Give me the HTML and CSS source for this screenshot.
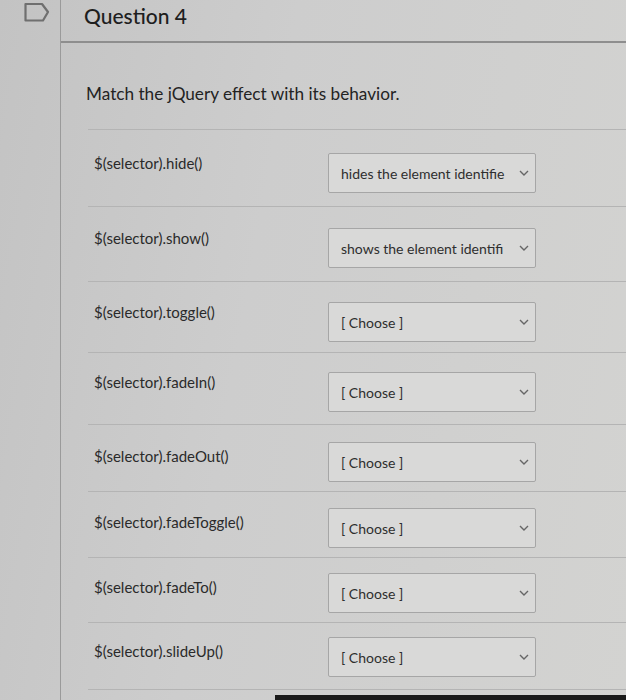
FILE: index.html
```
<!DOCTYPE html>
<html>
<head>
<meta charset="utf-8">
<link rel="stylesheet" href="styles.css">
</head>
<body>
<div class="page">
  <div class="gutter">
    <svg class="flag" width="30" height="24" viewBox="0 0 30 24"><path d="M3.5 4 L20 4 L26 12 L21 20.5 L3.5 20.5 Z" fill="none" stroke="#6f6f6f" stroke-width="2.2" stroke-linejoin="round"/></svg>
  </div>
  <div class="main">
    <div class="header"><h1 class="title">Question 4</h1></div>
    <p class="prompt">Match the jQuery effect with its behavior.</p>
    <div class="rows">
      <div class="row"><div class="label">$(selector).hide()</div><div class="select"><span class="value">hides the element identifie</span><svg class="chev" width="10" height="6" viewBox="0 0 10 6"><path d="M1 1 L5 5 L9 1" fill="none" stroke="#666" stroke-width="1.4"/></svg></div></div>
      <div class="row"><div class="label">$(selector).show()</div><div class="select"><span class="value">shows the element identifi</span><svg class="chev" width="10" height="6" viewBox="0 0 10 6"><path d="M1 1 L5 5 L9 1" fill="none" stroke="#666" stroke-width="1.4"/></svg></div></div>
      <div class="row"><div class="label">$(selector).toggle()</div><div class="select"><span class="value">[ Choose ]</span><svg class="chev" width="10" height="6" viewBox="0 0 10 6"><path d="M1 1 L5 5 L9 1" fill="none" stroke="#666" stroke-width="1.4"/></svg></div></div>
      <div class="row"><div class="label">$(selector).fadeIn()</div><div class="select"><span class="value">[ Choose ]</span><svg class="chev" width="10" height="6" viewBox="0 0 10 6"><path d="M1 1 L5 5 L9 1" fill="none" stroke="#666" stroke-width="1.4"/></svg></div></div>
      <div class="row"><div class="label">$(selector).fadeOut()</div><div class="select"><span class="value">[ Choose ]</span><svg class="chev" width="10" height="6" viewBox="0 0 10 6"><path d="M1 1 L5 5 L9 1" fill="none" stroke="#666" stroke-width="1.4"/></svg></div></div>
      <div class="row"><div class="label">$(selector).fadeToggle()</div><div class="select"><span class="value">[ Choose ]</span><svg class="chev" width="10" height="6" viewBox="0 0 10 6"><path d="M1 1 L5 5 L9 1" fill="none" stroke="#666" stroke-width="1.4"/></svg></div></div>
      <div class="row"><div class="label">$(selector).fadeTo()</div><div class="select"><span class="value">[ Choose ]</span><svg class="chev" width="10" height="6" viewBox="0 0 10 6"><path d="M1 1 L5 5 L9 1" fill="none" stroke="#666" stroke-width="1.4"/></svg></div></div>
      <div class="row"><div class="label">$(selector).slideUp()</div><div class="select"><span class="value">[ Choose ]</span><svg class="chev" width="10" height="6" viewBox="0 0 10 6"><path d="M1 1 L5 5 L9 1" fill="none" stroke="#666" stroke-width="1.4"/></svg></div></div>
    </div>
  </div>
</div>
<div class="bezel"></div>
</body>
</html>
```
FILE: styles.css
```
html, body {
  margin: 0;
  padding: 0;
}
body {
  position: relative;
  width: 626px;
  height: 700px;
  overflow: hidden;
  background: linear-gradient(100deg, #c3c3c3 0%, #cdcdcd 40%, #d3d3d1 100%);
  font-family: Lato, "Open Sans", "Liberation Sans", sans-serif;
  color: #2a2a2a;
}
.page {
  display: flex;
  height: 700px;
}
.gutter {
  width: 60px;
  flex: none;
}
.flag {
  display: block;
  margin-left: 22px;
  margin-top: 0;
}
.main {
  flex: 1;
  border-left: 1px solid #9a9a9a;
  display: flex;
  flex-direction: column;
}
.header {
  height: 43px;
  border-bottom: 2px solid #8e8e8e;
  padding-left: 23px;
  box-sizing: border-box;
}
.title {
  margin: 0;
  padding-top: 3px;
  font-size: 21px;
  font-weight: 500;
  line-height: 26px;
  color: #1e1e1e;
}
.prompt {
  margin: 40px 0 0 25px;
  font-size: 17.2px;
  line-height: 22px;
  color: #232323;
}
.rows {
  margin-top: 24px;
  margin-left: 27px;
  border-top: 1px solid #b4b4b4;
}
.row {
  height: 70px;
  box-sizing: border-box;
  border-bottom: 1px solid #b4b4b4;
  display: flex;
  align-items: flex-start;
  padding-top: 21px;
  padding-left: 6px;
}
.row:nth-child(1) { height: 77px; padding-top: 23px; }
.row:nth-child(2) { height: 75px; }
.row:nth-child(3) { height: 71px; padding-top: 20px; }
.row:nth-child(4) { height: 72px; padding-top: 19px; }
.row:nth-child(5) { height: 67px; padding-top: 17px; }
.row:nth-child(6) { height: 66px; padding-top: 16px; }
.row:nth-child(7) { height: 65px; padding-top: 15px; }
.row:nth-child(8) { height: 67px; padding-top: 14px; }
.label {
  width: 234px;
  flex: none;
  padding-top: 0;
  font-size: 15px;
  line-height: 20px;
  color: #2a2a2a;
}
.row:nth-child(n+5) .label { padding-top: 4px; }
.select {
  width: 208px;
  height: 40px;
  box-sizing: border-box;
  border: 1px solid #a6a6a6;
  border-radius: 2px;
  background: #d9d9d8;
  display: flex;
  align-items: center;
  gap: 4px;
  padding-left: 12px;
  padding-right: 6px;
}
.value {
  flex: 1;
  min-width: 0;
  overflow: hidden;
  white-space: nowrap;
  font-size: 14px;
  color: #2e2e2e;
}
.chev {
  display: block;
  flex: none;
}
.bezel {
  position: absolute;
  left: 275px;
  right: 0;
  bottom: 0;
  height: 5px;
  background: #1a1a1a;
}
```
